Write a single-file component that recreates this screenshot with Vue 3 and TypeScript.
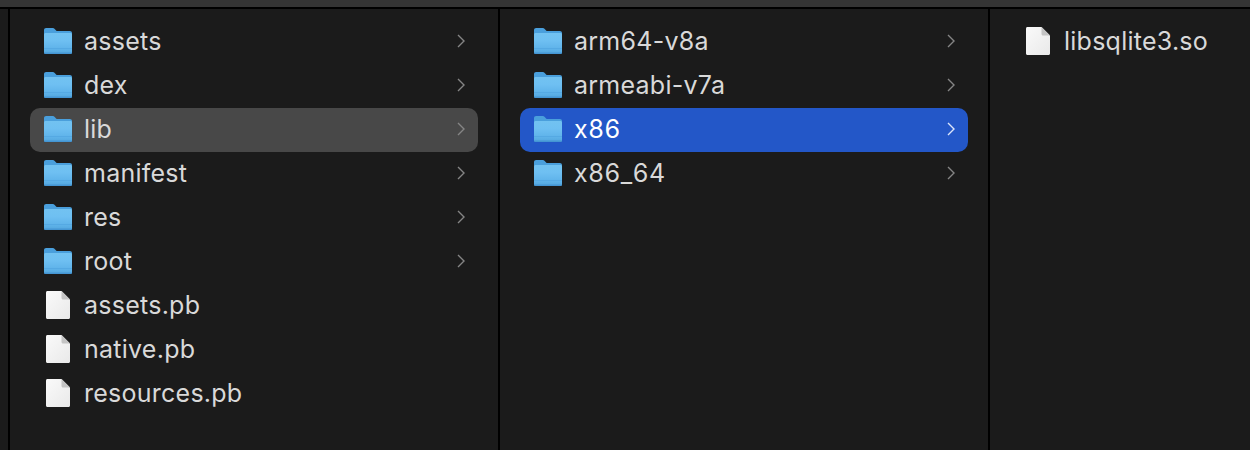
<script setup lang="ts">
interface Item { name: string; kind: 'folder' | 'file'; state?: 'active' | 'inactive' }
const columns: { items: Item[]; cls: string }[] = [
  { cls: 'wide', items: [
    { name: 'assets', kind: 'folder' },
    { name: 'dex', kind: 'folder' },
    { name: 'lib', kind: 'folder', state: 'inactive' },
    { name: 'manifest', kind: 'folder' },
    { name: 'res', kind: 'folder' },
    { name: 'root', kind: 'folder' },
    { name: 'assets.pb', kind: 'file' },
    { name: 'native.pb', kind: 'file' },
    { name: 'resources.pb', kind: 'file' },
  ] },
  { cls: 'wide', items: [
    { name: 'arm64-v8a', kind: 'folder' },
    { name: 'armeabi-v7a', kind: 'folder' },
    { name: 'x86', kind: 'folder', state: 'active' },
    { name: 'x86_64', kind: 'folder' },
  ] },
  { cls: 'last', items: [{ name: 'libsqlite3.so', kind: 'file' }] },
]
</script>

<template>
  <div class="finder">
    <div class="topbar"></div>
    <div class="columns">
      <div class="gutter"></div>
      <div v-for="(col, c) in columns" :key="c" class="col" :class="col.cls">
        <div v-for="item in col.items" :key="item.name" class="row" :class="item.state">
          <svg v-if="item.kind === 'folder'" class="icon" width="28" height="26" viewBox="0 0 28 26">
            <defs>
              <linearGradient :id="`fg-${item.name}`" x1="0" y1="0" x2="0" y2="1">
                <stop offset="0" stop-color="#72c2f1" />
                <stop offset="0.35" stop-color="#6fc0f2" />
                <stop offset="0.75" stop-color="#5fb3ea" />
                <stop offset="1" stop-color="#52a5dd" />
              </linearGradient>
            </defs>
            <path d="M0 2.200C0 .9.9 0 2.100 0h6.600c.9 0 1.400.3 2 .9l1.400 1.500c.4.4.7.5 1.300.5h12.500c1.200 0 2.100.9 2.100 2.100V24c0 1.200-.9 2-2.100 2H2.100C.9 26 0 25.200 0 24Z" fill="#4a9fdc" />
            <path d="M0 6.600c0-1 .7-1.600 1.600-1.600h24.800c.9 0 1.600.6 1.600 1.600V24c0 1.200-.9 2-2.100 2H2.100C.9 26 0 25.200 0 24Z" :fill="`url(#fg-${item.name})`" />
            <rect x="0" y="20" width="28" height="1" fill="#4ea2de" opacity=".6" />
            <rect x="0" y="24.600" width="28" height="1.400" rx=".7" fill="#3f8fce" opacity=".7" />
          </svg>
          <svg v-else class="icon file" width="24" height="28" viewBox="0 0 24 28">
            <defs>
              <linearGradient :id="`fl-${item.name}`" x1="0" y1="0" x2="1" y2="1">
                <stop offset="0" stop-color="#fafafa" />
                <stop offset="1" stop-color="#e9e9e9" />
              </linearGradient>
            </defs>
            <path d="M1.500 0H15.500L24 8.500V26.500c0 .9-.6 1.500-1.500 1.500H1.500C.6 28 0 27.400 0 26.500V1.500C0 .6.6 0 1.500 0Z" :fill="`url(#fl-${item.name})`" />
            <path d="M15.500 0 24 8.500H17c-.9 0-1.500-.6-1.500-1.500Z" fill="#c4c4c4" />
          </svg>
          <span class="name" :class="{ tabular: item.name.startsWith('x86') }">{{ item.name }}</span>
          <svg v-if="item.kind === 'folder'" class="chev" width="8" height="14" viewBox="0 0 8 14">
            <path d="M1 1l6 6-6 6" fill="none" stroke="currentColor" stroke-width="1.4" />
          </svg>
        </div>
      </div>
    </div>
  </div>
</template>

<style>
html, body { margin: 0; background: #1b1b1b; }
</style>

<style scoped>
.finder { width: 1250px; height: 450px; overflow: hidden; background: #1b1b1b; font-family: Inter, "Liberation Sans", sans-serif; display: flex; flex-direction: column; }
.topbar { height: 7px; background: #343434; border-bottom: 2px solid #000; flex: none; }
.columns { flex: 1; display: flex; }
.gutter { width: 8px; flex: none; border-right: 2px solid #000; }
.col { padding: 11px 0 0 20px; box-sizing: border-box; }
.wide { width: 490px; padding-right: 20px; border-right: 2px solid #000; }
.last { flex: 1; padding-right: 20px; }
.row { height: 44px; box-sizing: border-box; display: flex; align-items: center; padding: 0 13px 2px 14px; border-radius: 10px; color: #d9d9d9; font-size: 25px; }
.icon { flex: none; }
.file { margin-left: 2px; margin-right: 2px; }
.name { margin-left: 12px; flex: 1; white-space: nowrap; letter-spacing: 0.25px; }
.tabular { font-feature-settings: "tnum"; }
.chev { flex: none; color: #858585; }
.inactive { background: #484848; }
.active { background: #2357c8; color: #fff; }
.active .chev { color: #dbe5fa; }
</style>
